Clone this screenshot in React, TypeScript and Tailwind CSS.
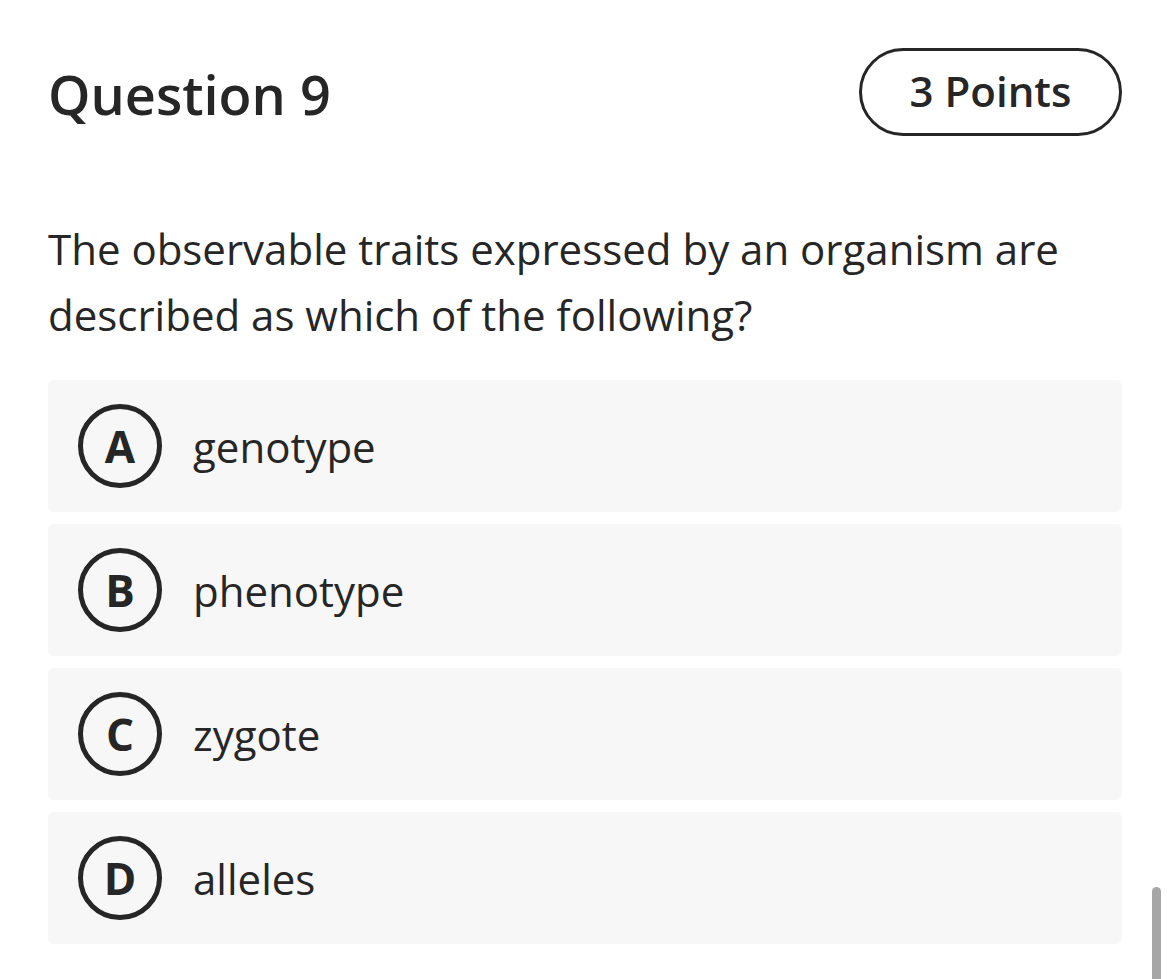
const options = [
  { letter: "A", text: "genotype" },
  { letter: "B", text: "phenotype" },
  { letter: "C", text: "zygote" },
  { letter: "D", text: "alleles" },
];

export default function App() {
  return (
    <div className="relative min-h-[979px] w-full overflow-hidden bg-white font-['Open_Sans',sans-serif] text-[#262626]">
      <div className="px-12 pt-12">
        <div className="flex items-center justify-between">
          <h1 className="pt-1 text-[54px] font-semibold leading-none">Question 9</h1>
          <div className="flex h-[88px] w-[263px] items-center justify-center rounded-full border-[3px] border-[#262626] pb-1 text-[42px] font-semibold">
            3 Points
          </div>
        </div>

        <p className="mt-[80px] text-[42px] leading-[66px]">
          The observable traits expressed by an organism are described as which
          of the following?
        </p>

        <div className="mt-[32px] flex flex-col gap-3">
          {options.map((o) => (
            <div
              key={o.letter}
              className="flex h-[132px] items-center gap-[31px] rounded-md bg-[#f7f7f7] pl-[30px]"
            >
              <div className="flex h-[84px] w-[84px] items-center justify-center rounded-full border-[5px] border-[#262626] text-[44px] font-bold">
                {o.letter}
              </div>
              <span className="text-[42px]">{o.text}</span>
            </div>
          ))}
        </div>
      </div>

      <div className="absolute right-[9px] top-[887px] h-[100px] w-[9px] rounded-full bg-[#a6a6a6]" />
    </div>
  );
}
